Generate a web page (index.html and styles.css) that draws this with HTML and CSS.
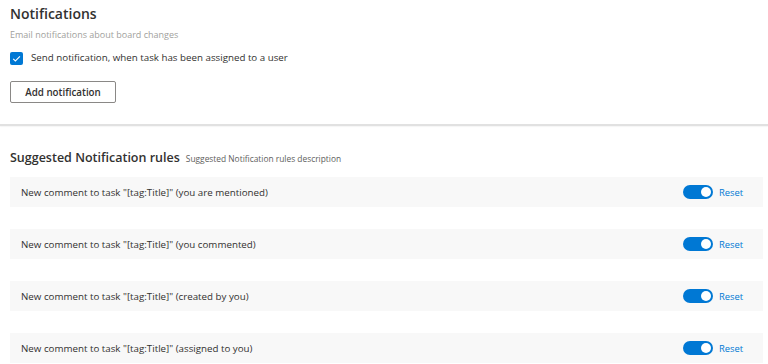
FILE: index.html
```html
<!DOCTYPE html>
<html>
<head>
<meta charset="utf-8">
<link rel="stylesheet" href="styles.css">
</head>
<body>
<section class="top">
  <h1 class="title">Notifications</h1>
  <div class="desc">Email notifications about board changes</div>
  <label class="check">
    <span class="box"><svg width="13" height="13" viewBox="0 0 13 13"><path d="M3.2 6.8 L5.4 9 L9.9 4.3" fill="none" stroke="#fff" stroke-width="1.1"/></svg></span>
    <span class="check-label">Send notification, when task has been assigned to a user</span>
  </label>
  <button class="btn">Add notification</button>
</section>
<div class="divider"></div>
<section class="rules">
  <div class="rules-head"><span class="rules-title">Suggested Notification rules</span><span class="rules-desc">Suggested Notification rules description</span></div>
  <div class="rule-list">
    <div class="rule"><span class="rule-text">New comment to task "[tag:Title]" (you are mentioned)</span><span class="rule-actions"><span class="toggle"><span class="knob"></span></span><span class="reset">Reset</span></span></div>
    <div class="rule"><span class="rule-text">New comment to task "[tag:Title]" (you commented)</span><span class="rule-actions"><span class="toggle"><span class="knob"></span></span><span class="reset">Reset</span></span></div>
    <div class="rule"><span class="rule-text">New comment to task "[tag:Title]" (created by you)</span><span class="rule-actions"><span class="toggle"><span class="knob"></span></span><span class="reset">Reset</span></span></div>
    <div class="rule"><span class="rule-text">New comment to task "[tag:Title]" (assigned to you)</span><span class="rule-actions"><span class="toggle"><span class="knob"></span></span><span class="reset">Reset</span></span></div>
  </div>
</section>
</body>
</html>
```
FILE: styles.css
```css
html, body {
  margin: 0;
  padding: 0;
  background: #fff;
  overflow: hidden;
}
body {
  font-family: "Open Sans", "Noto Sans", sans-serif;
  color: #323130;
}
.top {
  padding: 3px 10px 0 10px;
  display: flex;
  flex-direction: column;
  align-items: flex-start;
}
.title {
  margin: 0;
  font-size: 14px;
  line-height: 22px;
  font-weight: 600;
  color: #323130;
}
.desc {
  margin-top: 3px;
  font-size: 9px;
  line-height: 14px;
  color: #a19f9d;
}
.check {
  margin-top: 9px;
  display: flex;
  align-items: center;
  height: 14px;
}
.box {
  width: 13px;
  height: 13px;
  background: #0078d4;
  border-radius: 2px;
  display: flex;
}
.check-label {
  margin-left: 8px;
  font-size: 9.75px;
  line-height: 14px;
  color: #323130;
}
.btn {
  margin-top: 16px;
  height: 22px;
  width: 106px;
  padding: 0;
  background: #fff;
  border: 1px solid #8a8886;
  border-radius: 2px;
  font-family: inherit;
  font-size: 9.8px;
  font-weight: 600;
  color: #323130;
}
.divider {
  margin-top: 21px;
  height: 2px;
  background: #e1e1e1;
  box-shadow: 0 1px 1px rgba(0,0,0,0.04);
}
.rules {
  padding: 22px 5px 0 10px;
}
.rules-head {
  display: flex;
  align-items: baseline;
  height: 20px;
  line-height: 20px;
}
.rules-title {
  font-size: 12.5px;
  font-weight: 600;
  color: #323130;
}
.rules-desc {
  margin-left: 6px;
  font-size: 8.4px;
  color: #605e5c;
}
.rule-list {
  margin-top: 9px;
  display: flex;
  flex-direction: column;
  gap: 22px;
}
.rule {
  height: 30px;
  background: #f8f8f8;
  display: flex;
  align-items: center;
  justify-content: space-between;
  padding: 0 20px 0 11px;
}
.rule-text {
  font-size: 9.75px;
  color: #323130;
}
.rule-actions {
  display: flex;
  align-items: center;
}
.toggle {
  width: 30px;
  height: 14px;
  border-radius: 7px;
  background: #0078d4;
  display: flex;
  align-items: center;
  justify-content: flex-end;
  padding-right: 2px;
  box-sizing: border-box;
}
.knob {
  width: 10px;
  height: 10px;
  border-radius: 50%;
  background: #fff;
}
.reset {
  margin-left: 6px;
  font-size: 9.4px;
  color: #0078d4;
}
```
